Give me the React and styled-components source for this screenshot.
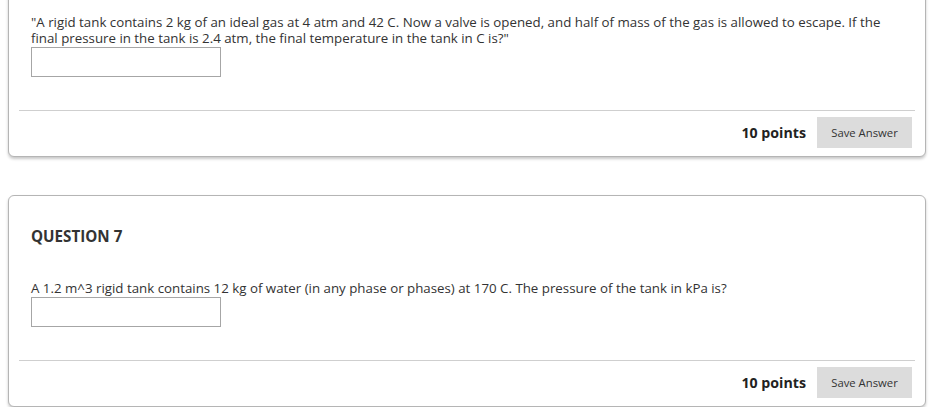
import React from "react";
import styled, { createGlobalStyle } from "styled-components";

const GlobalStyle = createGlobalStyle`
  html, body {
    margin: 0;
    padding: 0;
    background: #fff;
    overflow: hidden;
  }
  body {
    font-family: "Open Sans", "Liberation Sans", sans-serif;
    color: #333;
  }
`;

// the first card is scrolled partly out of view at the top
const Page = styled.div`
  display: flex;
  flex-direction: column;
  gap: 38px;
  padding: 0 8px;
  margin-top: -17px;
`;

const Card = styled.div`
  background: #fff;
  border: 1px solid #b5b5b5;
  border-radius: 6px;
  box-shadow: 0 2px 3px rgba(0, 0, 0, 0.22);
  padding: 0 10px 8px 10px;
`;

const Body = styled.div`
  padding: 30px 12px 0 12px;
`;

const Heading = styled.h3`
  margin: 0 0 34px 0;
  font-size: 15.2px;
  line-height: 20px;
  font-weight: 700;
  color: #333;
`;

const Prompt = styled.p`
  margin: 0;
  font-size: 13.3px;
  line-height: 16px;
  color: #333;
`;

const AnswerInput = styled.input`
  display: block;
  box-sizing: border-box;
  width: 190px;
  height: 30px;
  margin: 1px 0 33px 0;
  border: 1px solid #a6a6a6;
  border-radius: 0;
  padding: 0 6px;
  font-family: inherit;
  font-size: 13px;
  outline: none;
`;

const Divider = styled.hr`
  margin: 0;
  border: none;
  border-top: 1px solid #cfcfcf;
`;

const Footer = styled.div`
  display: flex;
  justify-content: flex-end;
  align-items: center;
  gap: 11px;
  margin-top: 6px;
  padding-right: 3px;
`;

const Points = styled.span`
  font-size: 14.2px;
  font-weight: 700;
  color: #222;
`;

const SaveButton = styled.button`
  box-sizing: border-box;
  width: 95px;
  height: 31px;
  border: none;
  border-radius: 0;
  background: #dcdcdc;
  color: #333;
  font-family: "Open Sans", "Liberation Sans", sans-serif;
  font-size: 11.3px;
  padding: 0;
  cursor: pointer;
`;

const questions = [
  {
    n: 6,
    hideHeading: true,
    text: "\"A rigid tank contains 2 kg of an ideal gas at 4 atm and 42 C. Now a valve is opened, and half of mass of the gas is allowed to escape. If the final pressure in the tank is 2.4 atm, the final temperature in the tank in C is?\"",
  },
  {
    n: 7,
    text: "A 1.2 m^3 rigid tank contains 12 kg of water (in any phase or phases) at 170 C. The pressure of the tank in kPa is?",
  },
];

const Question = ({ n, text, hideHeading }) => (
  <Card>
    <Body>
      {!hideHeading && <Heading>QUESTION {n}</Heading>}
      <Prompt>{text}</Prompt>
      <AnswerInput type="text" />
    </Body>
    <Divider />
    <Footer>
      <Points>10 points</Points>
      <SaveButton>Save Answer</SaveButton>
    </Footer>
  </Card>
);

export default function App() {
  return (
    <>
      <GlobalStyle />
      <Page>
        {questions.map((q) => (
          <Question key={q.n} {...q} />
        ))}
      </Page>
    </>
  );
}
